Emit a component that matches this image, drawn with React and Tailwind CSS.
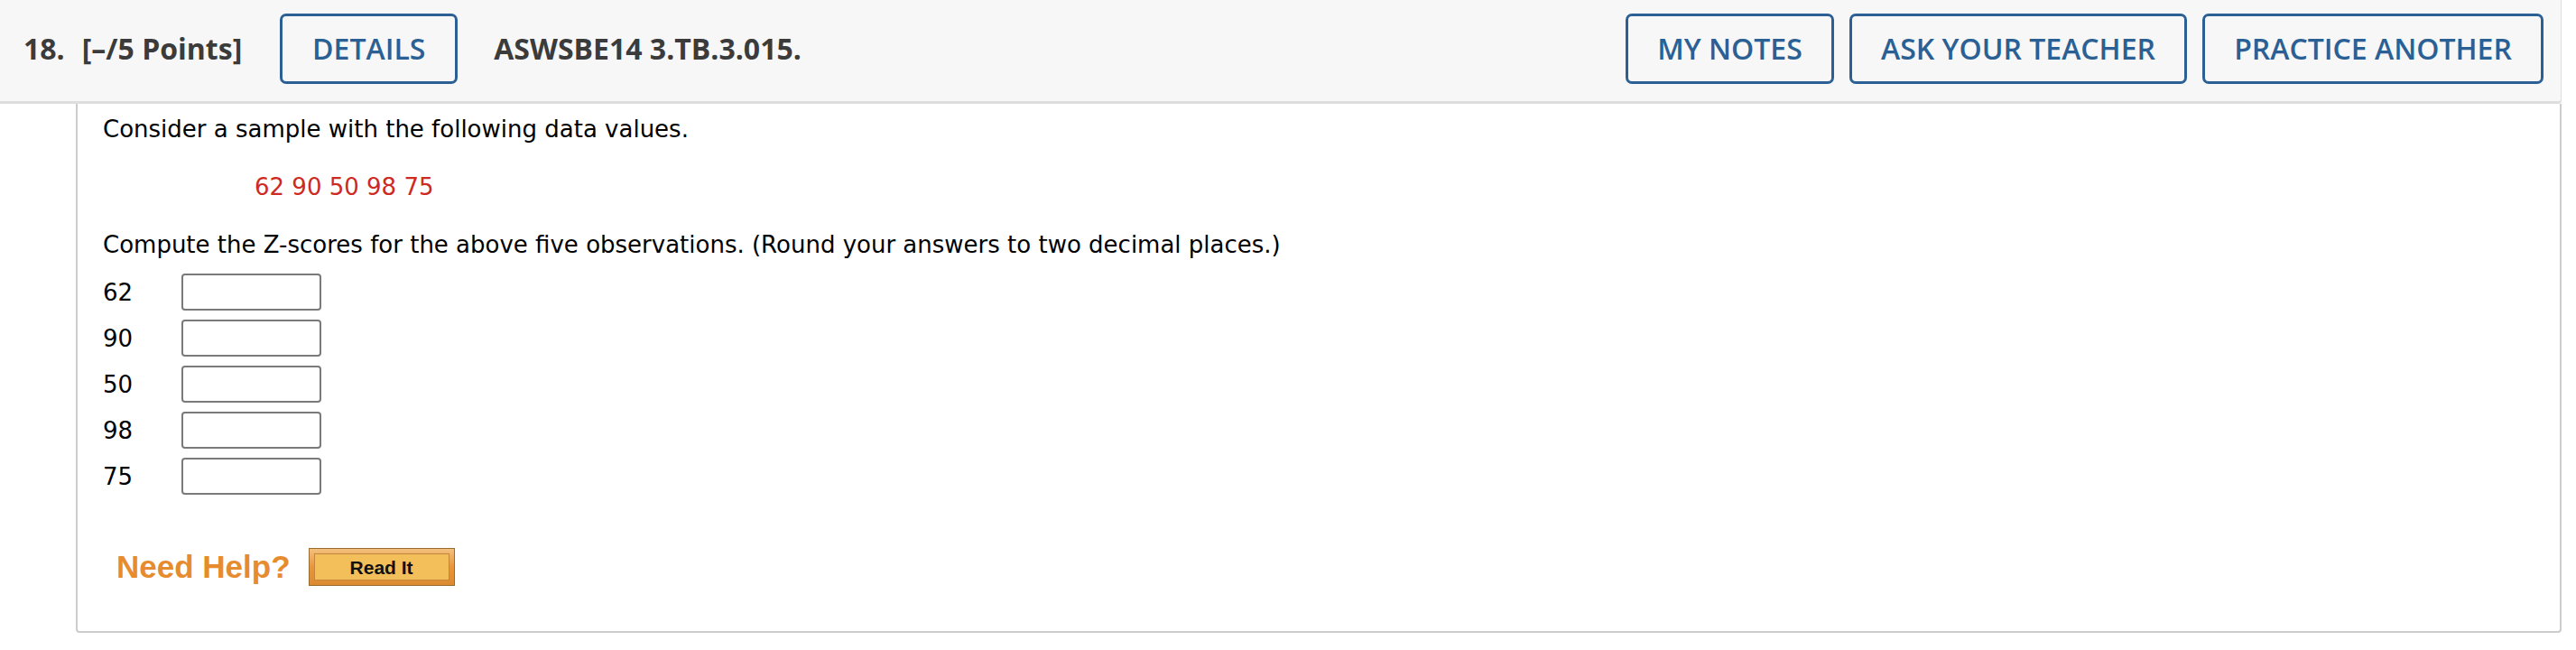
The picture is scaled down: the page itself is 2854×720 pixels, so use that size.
import React from "react";

const headFont = { fontFamily: '"Open Sans", "Liberation Sans", sans-serif' };

function HeadButton({ w, children }) {
  return (
    <div
      className={`${w} h-[78px] border-[3px] border-[#2c5f93] rounded-[7px] flex items-center justify-center text-[32px] font-semibold text-[#2b6094] leading-none`}
    >
      {children}
    </div>
  );
}

export default function App() {
  const values = ["62", "90", "50", "98", "75"];
  return (
    <div className="w-[2838px] bg-white">
      <div
        className="h-[115px] bg-[#f7f7f7] border-b-[3px] border-r border-[#dedede] rounded-br-[4px] flex items-start pt-[15px] pl-[26px] pr-[19px]"
        style={headFont}
      >
        <div className="h-[78px] flex items-center text-[32px] font-bold text-[#3b3b3b] leading-none">
          <span className="mr-[19px]">18.</span>
          <span>[–/5 Points]</span>
        </div>
        <div className="ml-[42px]">
          <HeadButton w="w-[197px]">DETAILS</HeadButton>
        </div>
        <div className="ml-[40px] h-[78px] flex items-center text-[32px] font-bold text-[#3b3b3b] leading-none">
          ASWSBE14 3.TB.3.015.
        </div>
        <div className="ml-auto flex gap-[17px]">
          <HeadButton w="w-[231px]">MY NOTES</HeadButton>
          <HeadButton w="w-[374px]">ASK YOUR TEACHER</HeadButton>
          <HeadButton w="w-[378px]">PRACTICE ANOTHER</HeadButton>
        </div>
      </div>

      <div
        className="ml-[84px] h-[586px] border-l-2 border-r-2 border-b-2 border-[#cccccc] rounded-b-[4px] pl-[28px] pt-[13px] text-black"
        style={{ fontFamily: '"DejaVu Sans", Verdana, sans-serif' }}
      >
        <p className="text-[26px] leading-[30px]">Consider a sample with the following data values.</p>
        <p className="mt-[34px] ml-[168px] text-[26px] leading-[30px] text-[#cc2a22]">62 90 50 98 75</p>
        <p className="mt-[34px] text-[26px] leading-[30px]">
          Compute the Z-scores for the above five observations. (Round your answers to two decimal places.)
        </p>
        <div className="mt-[17px] flex flex-col gap-[10px]">
          {values.map((v) => (
            <div key={v} className="flex items-center h-[41px]">
              <span className="w-[87px] text-[26px] leading-[30px]">{v}</span>
              <input
                type="text"
                className="w-[155px] h-[41px] border-2 border-[#7a7a7a] rounded-[4px] bg-white outline-none"
              />
            </div>
          ))}
        </div>
        <div className="mt-[59px] ml-[15px] flex items-center h-[42px]">
          <span
            className="text-[35px] leading-[42px] font-bold text-[#e78b2f]"
            style={{ fontFamily: '"Liberation Sans", Arial, sans-serif' }}
          >
            Need Help?
          </span>
          <div className="ml-[20px] w-[162px] h-[42px] border border-[#9c6c2c] bg-gradient-to-b from-[#f3c07e] via-[#e9953a] to-[#dc8a30] p-[5px]">
            <div
              className="w-full h-full border border-[#c4873a] bg-[#f2bf5a] flex items-center justify-center text-[21px] font-bold text-[#111] leading-none"
              style={{ fontFamily: '"Liberation Sans", Arial, sans-serif' }}
            >
              Read It
            </div>
          </div>
        </div>
      </div>
    </div>
  );
}
